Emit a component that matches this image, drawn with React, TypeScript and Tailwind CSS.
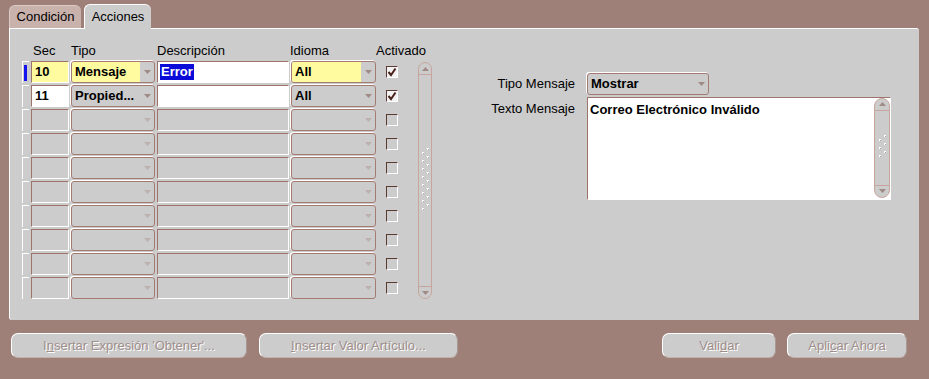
import React from "react";

// colours taken from the Oracle Forms style screen
// bg #9e8078, canvas #cccccc, current record yellow #fffb9e

function Tri({ up, faint }: { up?: boolean; faint?: boolean }) {
  return (
    <svg width="7" height="4" viewBox="0 0 7 4">
      <polygon
        points={up ? "0,4 7,4 3.5,0" : "0,0 7,0 3.5,4"}
        fill={faint ? "#bdb1ae" : "#a08a86"}
      />
    </svg>
  );
}

function Grip({ rows }: { rows: number }) {
  const dots = [];
  for (let i = 0; i < rows; i++) {
    dots.push(<rect key={"a" + i} x="1" y={i * 8 + 4} width="2" height="2" fill="#ffffff" />);
    dots.push(<rect key={"b" + i} x="6" y={i * 8} width="2" height="2" fill="#ffffff" />);
    dots.push(<rect key={"c" + i} x="2" y={i * 8 + 5} width="1" height="1" fill="#a9a9a9" />);
    dots.push(<rect key={"d" + i} x="7" y={i * 8 + 1} width="1" height="1" fill="#a9a9a9" />);
  }
  return (
    <svg width="9" height={rows * 8 + 2}>
      {dots}
    </svg>
  );
}

function ScrollBar({ className, rows }: { className: string; rows: number }) {
  return (
    <div className={`flex flex-col rounded-full border border-[#c7a59e] bg-[#cccccc] ${className}`}>
      <div className="h-[12px] shrink-0 border-b border-[#c7a59e] flex items-center justify-center">
        <Tri up />
      </div>
      <div className="flex-1 flex items-center justify-center">
        <Grip rows={rows} />
      </div>
      <div className="h-[12px] shrink-0 border-t border-[#c7a59e] flex items-center justify-center">
        <Tri />
      </div>
    </div>
  );
}

function TextCell({ className, text, selected }: { className: string; text?: string; selected?: boolean }) {
  return (
    <div
      className={`h-full shrink-0 flex items-center pl-[2px] border border-t-[#9d746b] border-l-[#9d746b] border-b-white border-r-white text-[13px] font-bold text-black ${className}`}
    >
      {selected ? (
        <span className="bg-[#0b0bd9] text-white px-[1px] leading-[16px]">{text}</span>
      ) : (
        <span className="pl-[1px]">{text}</span>
      )}
    </div>
  );
}

function Combo({ className, text, yellow, faint }: { className: string; text?: string; yellow?: boolean; faint?: boolean }) {
  return (
    <div
      className={`h-full shrink-0 flex rounded-[3px] border border-[#a47b73] shadow-[-1px_-1px_0_#ffffff] overflow-hidden bg-[#cccccc] ${className}`}
    >
      <div className={`flex-1 flex items-center pl-[3px] text-[13px] font-bold text-black whitespace-nowrap ${yellow ? "bg-[#fffb9e]" : ""}`}>
        {text}
      </div>
      <div className="w-[14px] shrink-0 flex items-center justify-center">
        <Tri faint={faint} />
      </div>
    </div>
  );
}

function Check({ on }: { on?: boolean }) {
  return (
    <div
      className={`w-[12px] h-[12px] border border-t-[#5b3a33] border-l-[#5b3a33] border-b-white border-r-white flex items-center justify-center ${on ? "bg-[#f2f2f2]" : ""}`}
    >
      {on && (
        <svg width="10" height="10" viewBox="0 0 10 10">
          <polyline points="1.5,5 4,8 8.5,1.5" fill="none" stroke="#4a211b" strokeWidth="2" />
        </svg>
      )}
    </div>
  );
}

type Row = { sec?: string; tipo?: string; desc?: string; idioma?: string; on?: boolean; current?: boolean };

const rows: Row[] = [
  { sec: "10", tipo: "Mensaje", desc: "Error", idioma: "All", on: true, current: true },
  { sec: "11", tipo: "Propied...", desc: "", idioma: "All", on: true },
  {}, {}, {}, {}, {}, {}, {}, {},
];

function Button({ className, children }: { className: string; children: React.ReactNode }) {
  return (
    <div
      className={`h-full shrink-0 flex items-center justify-center rounded-[7px] bg-[#cccccc] border border-t-white border-l-white border-b-[#c2b1ad] border-r-[#a89994] text-[13px] text-[#9f8e8b] [text-shadow:1px_1px_0_#ffffff] ${className}`}
    >
      {children}
    </div>
  );
}

export default function App() {
  return (
    <div className="w-[929px] h-[379px] bg-[#9e8078] flex flex-col pl-[9px] pt-[4px] overflow-hidden" style={{ fontFamily: '"Liberation Sans", Arial, sans-serif' }}>
      {/* tabs */}
      <div className="flex items-end gap-[3px] h-[24px]">
        <div className="w-[72px] h-[23px] rounded-t-[6px] bg-[#c9b1ac] border-t border-l border-[#dccac6] flex items-center justify-center text-[13px] text-black">
          Condición
        </div>
        <div className="relative z-10 -mb-px w-[67px] h-[25px] rounded-t-[6px] bg-[#cccccc] border-t border-l border-white flex items-center justify-center text-[13px] text-black">
          Acciones
        </div>
      </div>

      {/* canvas */}
      <div className="w-[910px] h-[292px] bg-[#cccccc] border-t border-l border-white rounded-tr-[3px] rounded-bl-[3px] flex pl-[11px] pt-[15px]">
        <div className="flex flex-col">
          <div className="flex h-[14px] items-center text-[13px] text-black whitespace-nowrap">
            <div className="w-[12px]" />
            <div className="w-[38px]">Sec</div>
            <div className="w-[86px]">Tipo</div>
            <div className="w-[133px]">Descripción</div>
            <div className="w-[86px]">Idioma</div>
            <div>Activado</div>
          </div>
          <div className="flex mt-[3px]">
            <div className="flex flex-col gap-[2px]">
              {rows.map((r, i) => (
                <div key={i} className="flex h-[22px] gap-[2px]">
                  <div className="w-[8px] h-full flex">
                    <div className="ml-[1px] w-[7px] h-full border-l border-t border-white flex items-center">
                      {r.current && <div className="ml-[1px] w-[3px] h-[16px] bg-[#1414f0]" />}
                    </div>
                  </div>
                  <TextCell className={`w-[38px] ${r.current ? "bg-[#fffb9e]" : r.sec ? "bg-white" : ""}`} text={r.sec} />
                  <Combo className="w-[84px]" text={r.tipo} yellow={r.current} faint={!r.tipo} />
                  <TextCell className={`w-[132px] ${r.sec ? "bg-white" : ""}`} text={r.desc} selected={r.current} />
                  <Combo className="w-[85px]" text={r.idioma} yellow={r.current} faint={!r.idioma} />
                  <div className="w-[40px] flex items-center pl-[8px]">
                    <Check on={r.on} />
                  </div>
                </div>
              ))}
            </div>
            <ScrollBar className="w-[14px] h-[237px] mt-[1px]" rows={8} />
          </div>
        </div>

        {/* message detail */}
        <div className="ml-auto mr-[28px] mt-[29px] grid grid-cols-[auto_304px] gap-x-[12px] gap-y-[2px] h-fit">
          <div className="text-[13px] text-black text-right self-center">Tipo Mensaje</div>
          <Combo className="w-[122px] h-[22px]" text="Mostrar" />
          <div className="text-[13px] text-black text-right pt-[2px]">Texto Mensaje</div>
          <div className="h-[103px] flex bg-white border border-t-[#9d746b] border-l-[#9d746b] border-b-white border-r-white">
            <div className="flex-1 pl-[2px] pt-[2px] text-[13px] font-bold text-black">Correo Electrónico Inválido</div>
            <ScrollBar className="w-[16px] h-[100px]" rows={3} />
          </div>
        </div>
      </div>

      {/* buttons */}
      <div className="flex h-[25px] mt-[13px]">
        <Button className="ml-[2px] w-[236px]">
          <span>I<span className="underline">n</span>sertar Expresión 'Obtener'...</span>
        </Button>
        <Button className="ml-[12px] w-[199px]">
          <span><span className="underline">I</span>nsertar Valor Artículo...</span>
        </Button>
        <Button className="ml-[204px] w-[114px]">
          <span>Vali<span className="underline">d</span>ar</span>
        </Button>
        <Button className="ml-[11px] w-[120px]">
          <span>Apli<span className="underline">c</span>ar Ahora</span>
        </Button>
      </div>
    </div>
  );
}
